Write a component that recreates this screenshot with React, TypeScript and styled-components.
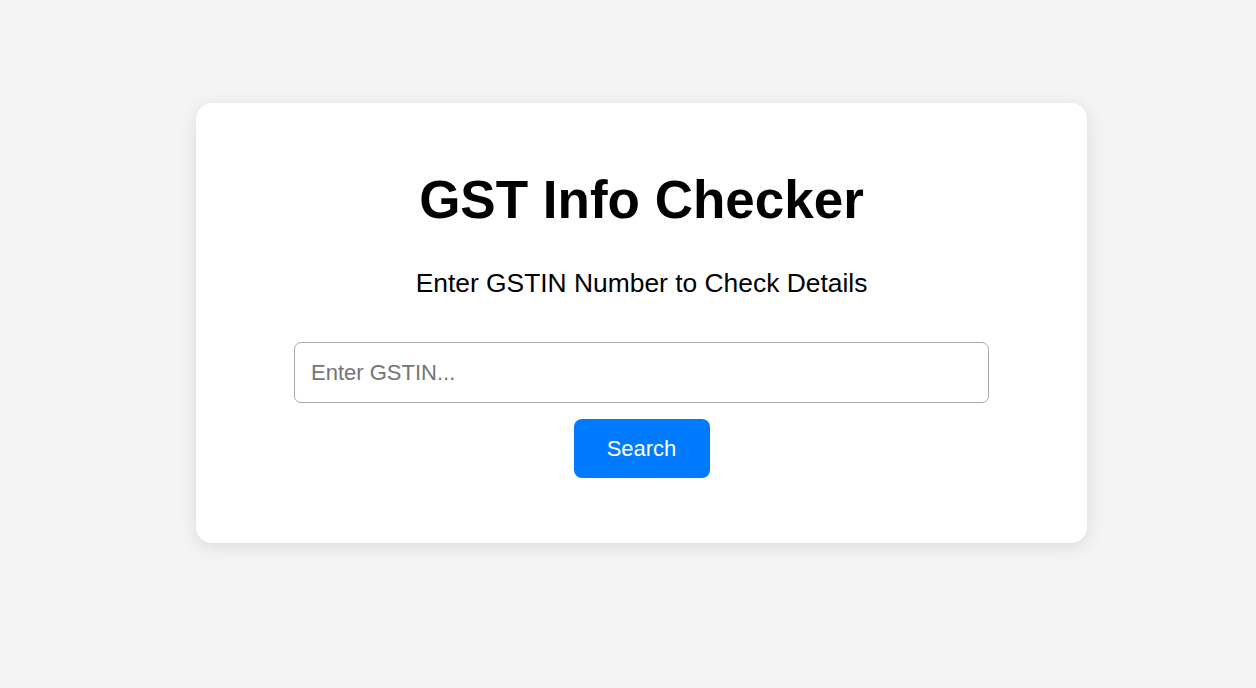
import React from "react";
import styled, { createGlobalStyle } from "styled-components";

const GlobalStyle = createGlobalStyle`
  html, body {
    margin: 0;
    padding: 0;
    background: #f4f4f4;
    font-family: "Liberation Sans", Arial, sans-serif;
  }
  * { box-sizing: border-box; }
`;

const Page = styled.div`
  min-height: 688px;
  padding: 103px 0 0 196px;
`;

const Card = styled.div`
  width: 891px;
  background: #ffffff;
  border-radius: 16px;
  box-shadow: 0 4px 18px rgba(0, 0, 0, 0.1);
  padding: 71px 98px 65px;
  display: flex;
  flex-direction: column;
  align-items: center;
`;

const Title = styled.h1`
  margin: 0;
  font-size: 53px;
  line-height: 52px;
  font-weight: 700;
  color: #000;
`;

const Subtitle = styled.p`
  margin: 44px 0 0;
  font-size: 26.4px;
  line-height: 26px;
  color: #000;
`;

const Input = styled.input`
  margin-top: 46px;
  width: 100%;
  height: 61px;
  border: 1px solid #aaaaaa;
  border-radius: 7px;
  padding: 0 16px;
  font-family: "Liberation Sans", Arial, sans-serif;
  font-size: 22px;
  color: #000;
  outline: none;
  &::placeholder {
    color: #757575;
  }
`;

const Button = styled.button`
  margin-top: 16px;
  width: 136px;
  height: 59px;
  border: none;
  border-radius: 8px;
  background: #007bff;
  color: #ffffff;
  font-family: "Liberation Sans", Arial, sans-serif;
  font-size: 22px;
  cursor: pointer;
`;

export default function App() {
  return (
    <>
      <GlobalStyle />
      <Page>
        <Card>
          <Title>GST Info Checker</Title>
          <Subtitle>Enter GSTIN Number to Check Details</Subtitle>
          <Input placeholder="Enter GSTIN..." />
          <Button>Search</Button>
        </Card>
      </Page>
    </>
  );
}
